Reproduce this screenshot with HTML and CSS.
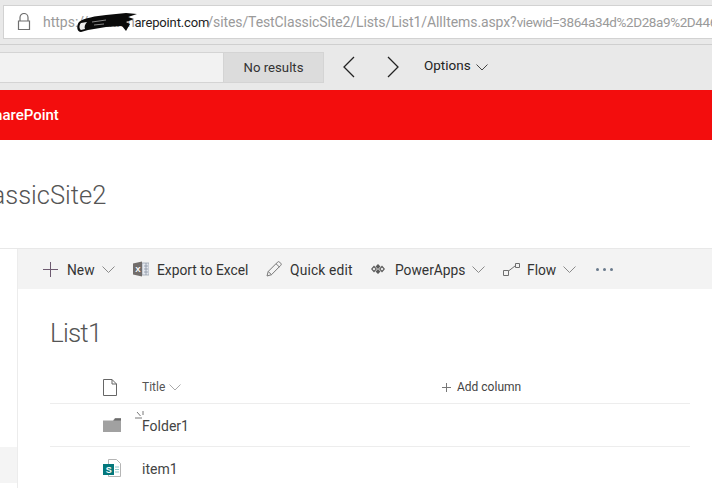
FILE: index.html
```html
<!DOCTYPE html>
<html lang="en">
<head>
<meta charset="utf-8">
<title>List1</title>
<link rel="stylesheet" href="styles.css">
</head>
<body>
<header class="browser">
  <div class="urlwrap">
    <div class="urlbar">
      <svg class="lock" width="14" height="18" viewBox="0 0 14 18"><path d="M3 8V4.500a4 4 0 0 1 8 0V8M1.500 8h11v8.500h-11z" fill="none" stroke="#6f6f6f" stroke-width="1.200"/></svg>
      <span class="url"><span class="dim">https://</span><span class="masked">xxxx.sh</span><span class="host">arepoint.com</span><span class="dim path">/sites/TestClassicSite2/Lists/List1/AllItems.aspx?</span><span class="dim query">viewid=3864a34d%2D28a9%2D446b%2D</span></span>
      <svg class="scribble" width="62" height="22" viewBox="0 0 62 22"><path d="M3 10C8 6 20 4 30 3L50 1l11 1-9 3 6 2-8 3 4 2-4 7-4-5-16 1-18 3-7 2C1 20 0 14 3 10z" fill="#0a0a0a"/><path d="M5 11c-2 2-2 6 0 7l4-1c-1-2 0-5 2-7z" fill="#eee"/><path d="M16 10l14-2M18 13l10-1" stroke="#888" stroke-width="1"/></svg>
    </div>
  </div>
  <div class="findbar">
    <div class="findinput"></div>
    <div class="findcount">No results</div>
    <svg class="findnav prev" width="13" height="22" viewBox="0 0 13 22"><path d="M12 1 2 11l10 10" fill="none" stroke="#222" stroke-width="1.300"/></svg>
    <svg class="findnav next" width="13" height="22" viewBox="0 0 13 22"><path d="M1 1l10 10L1 21" fill="none" stroke="#222" stroke-width="1.300"/></svg>
    <span class="options">Options</span>
    <svg class="optchev" width="12" height="7" viewBox="0 0 12 7"><path d="M.5.500 6 6 11.500.5" fill="none" stroke="#444"/></svg>
  </div>
</header>
<div class="suitebar"><span class="brand">SharePoint</span></div>
<div class="sitehead"><h1 class="sitename">TestClassicSite2</h1></div>
<div class="workspace">
  <nav class="leftnav"><div class="navpick"></div></nav>
  <main class="content">
    <div class="cmdbar">
      <div class="cmd cmd-new">
        <svg width="15" height="15" viewBox="0 0 15 15"><path d="M7.500 0v15M0 7.500h15" stroke="#6d5a70" stroke-width="1"/></svg>
        <span class="lbl w-new">New</span>
        <svg class="chev" width="13" height="7" viewBox="0 0 13 7"><path d="M.5.500 6.500 6.500 12.500.5" fill="none" stroke="#8a8a8a"/></svg>
      </div>
      <div class="cmd cmd-excel">
        <svg width="16" height="16" viewBox="0 0 16 16"><path d="M9 2h7v12H9z" fill="#e4e8ef" stroke="#9aa3b0" stroke-width=".8"/><path d="M11 5h4M11 8h4M11 11h4M13 2v12" stroke="#8a94a3" stroke-width=".8"/><path d="M0 2.500 9 .5v15l-9-2z" fill="#716c6a"/><text x="2.200" y="11" class="xmark">X</text></svg>
        <span class="lbl w-excel">Export to Excel</span>
      </div>
      <div class="cmd cmd-edit">
        <svg width="16" height="16" viewBox="0 0 16 16"><path d="M1 15l1.200-4.500L11.500 1.200a1.500 1.500 0 0 1 2.200 0l1 1a1.500 1.500 0 0 1 0 2.200L5.500 13.700zM2.200 10.500l3.300 3.200M10 2.700l3.300 3.200" fill="none" stroke="#777" stroke-width="1"/></svg>
        <span class="lbl w-edit">Quick edit</span>
      </div>
      <div class="cmd cmd-apps">
        <svg width="14" height="10" viewBox="0 0 14 10"><path d="M3 1.500 6 5 3 8.500 0 5zM11 1.500 14 5l-3 3.500L8 5z" fill="#5b5b5b"/><path d="M7 0 9.500 2.500 7 5 4.500 2.500zM7 5l2.500 2.500L7 10 4.500 7.500z" fill="#5b5b5b"/><path d="M3 3.500 4.500 5 3 6.500 1.500 5zM11 3.500 12.500 5 11 6.500 9.500 5z" fill="#f3f3f3"/></svg>
        <span class="lbl w-apps">PowerApps</span>
        <svg class="chev" width="13" height="7" viewBox="0 0 13 7"><path d="M.5.500 6.500 6.500 12.500.5" fill="none" stroke="#8a8a8a"/></svg>
      </div>
      <div class="cmd cmd-flow">
        <svg width="17" height="13" viewBox="0 0 17 13"><path d="M.5 7.500h5v5h-5zM12.500.5h4v4h-4zM5.500 8 12 3" fill="none" stroke="#6e6e6e"/></svg>
        <span class="lbl w-flow">Flow</span>
        <svg class="chev" width="13" height="7" viewBox="0 0 13 7"><path d="M.5.500 6.500 6.500 12.500.5" fill="none" stroke="#8a8a8a"/></svg>
      </div>
      <div class="more"><i></i><i></i><i></i></div>
    </div>
    <section class="listarea">
      <h2 class="listname">List1</h2>
      <div class="row headrow">
        <div class="iconcol"><svg width="14" height="17" viewBox="0 0 14 17"><path d="M.5.500h8.500l4.500 4.500v11.500H.5zM9 .5V5h4.500" fill="none" stroke="#666"/></svg></div>
        <div class="titlecol"><span class="coltitle">Title</span><svg width="12" height="7" viewBox="0 0 12 7"><path d="M.5.500 6 6 11.500.5" fill="none" stroke="#aaa"/></svg></div>
        <div class="addcol"><svg width="9" height="9" viewBox="0 0 9 9"><path d="M4.500 0v9M0 4.500h9" stroke="#777"/></svg><span>Add column</span></div>
      </div>
      <div class="row itemrow">
        <div class="iconcol"><svg width="18" height="14" viewBox="0 0 18 14"><path d="M0 2.500h10L12 0h6v14H0z" fill="#a1a1a1"/><path d="M10.500 2.500 12.300.6H18v1.900z" fill="#6b6b6b"/></svg></div>
        <div class="titlecol itemname">Folder1
          <svg class="spark" width="9" height="8" viewBox="0 0 9 8"><path d="M0 7h7M2 1l3.500 4M8 0v4" stroke="#555" stroke-width=".8" fill="none"/></svg>
        </div>
      </div>
      <div class="row itemrow">
        <div class="iconcol"><svg width="18" height="18" viewBox="0 0 18 18"><path d="M5.500.5h8l4 4v13h-12z" fill="#fff" stroke="#b5b5b5"/><path d="M12 8h4M12 10.500h4M12 13h4" stroke="#8fc7c9"/><path d="M0 5h11v11H0z" fill="#03787c"/><text x="2.800" y="13.800" class="smark">S</text></svg></div>
        <div class="titlecol itemname">item1</div>
      </div>
    </section>
  </main>
</div>
</body>
</html>
```
FILE: styles.css
```css
* { box-sizing: border-box; }
html, body { margin: 0; height: 100%; overflow: hidden; background: #fff; }
body { width: 712px; height: 488px; font-family: Roboto, "Open Sans", "Liberation Sans", sans-serif; color: #333; }
h1, h2 { margin: 0; font-weight: 400; }

.browser { height: 90px; background: #e9e9e9; overflow: hidden; }
.urlwrap { height: 45px; padding: 5px 0 0 3px; border-bottom: 1px solid #cfcfcf; }
.urlbar { position: relative; width: 760px; height: 34px; display: flex; align-items: center; background: #fff; border: 1px solid #d2d2d2; padding-left: 13px; white-space: nowrap; }
.lock { flex: none; margin-right: 12px; }
.url { display: flex; align-items: baseline; font-size: 14px; color: #111; }
.dim { color: #9a9a9a; }
.masked { display: block; width: 46px; text-align: right; color: #9a9a9a; }
.host { display: block; width: 73px; font-size: 13px; letter-spacing: -.15px; color: #222; }
.path { letter-spacing: -.1px; }
.query { font-size: 13.500px; letter-spacing: -.4px; }
.scribble { position: absolute; left: 72px; top: 6px; }

.findbar { display: flex; align-items: center; height: 44px; }
.findinput { width: 223px; height: 31px; background: #f2f2f2; border: 1px solid #d4d4d4; border-left: 0; border-right: 0; }
.findcount { width: 101px; height: 31px; display: flex; align-items: center; justify-content: center; font-size: 13.200px; color: #333; background: #dcdcdc; border: 1px solid #d4d4d4; }
.findnav { flex: none; }
.prev { margin-left: 18px; }
.next { margin-left: 32px; }
.options { margin-left: 24px; margin-top: -5px; font-size: 13.500px; color: #222; }
.optchev { margin-left: 5px; }

.suitebar { height: 50px; background: #f30d0d; display: flex; align-items: center; overflow: hidden; }
.brand { margin-left: -15px; font-size: 15px; font-weight: 500; color: #fff; }

.sitehead { height: 108px; display: flex; align-items: center; overflow: hidden; }
.sitename { margin-left: -79px; margin-top: 1px; font-size: 25.500px; color: #555; white-space: nowrap; font-weight: 300; }

.workspace { display: flex; height: 240px; border-top: 1px solid #e8e8e8; }
.leftnav { width: 18px; flex: none; border-right: 1px solid #ececec; display: flex; flex-direction: column; }
.navpick { height: 36px; margin-top: 198px; background: #f4f4f4; }
.content { flex: 1; min-width: 0; }

.cmdbar { height: 40px; display: flex; align-items: center; background: #f3f3f3; font-size: 13.800px; color: #333; white-space: nowrap; }
.cmd { display: flex; align-items: center; flex: none; }
.cmd-new { margin-left: 25px; }
.chev { margin-left: 8px; }
.lbl { display: block; padding-top: 2px; }
.w-new { margin-left: 9px; width: 27px; }
.cmd-excel { margin-left: 18px; }
.w-excel { margin-left: 8px; width: 91px; }
.cmd-edit { margin-left: 18px; }
.w-edit { margin-left: 8px; width: 63px; letter-spacing: .15px; }
.cmd-apps { margin-left: 18px; }
.w-apps { margin-left: 10px; width: 69px; }
.cmd-flow { margin-left: 18px; }
.w-flow { margin-left: 7px; width: 28px; }
.xmark { font: 700 8px "Liberation Sans", sans-serif; fill: #fff; }
.smark { font: 700 9px "Liberation Sans", sans-serif; fill: #fff; }
.more { display: flex; gap: 4px; margin-left: 20px; }
.more i { width: 3px; height: 3px; border-radius: 50%; background: #6a7a8c; }

.listarea { padding: 0 22px 0 32px; }
.listname { height: 80px; padding-top: 26px; font-size: 26px; letter-spacing: -.8px; line-height: 36px; color: #555; font-weight: 300; }
.row { display: flex; align-items: center; border-bottom: 1px solid #ededed; }
.headrow { height: 35px; padding-top: 2px; }
.itemrow { height: 43px; }
.iconcol { width: 92px; flex: none; display: flex; padding-left: 53px; }
.titlecol { position: relative; display: flex; align-items: center; width: 300px; flex: none; }
.coltitle { font-size: 12px; color: #555; margin-right: 4px; }
.addcol { display: flex; align-items: center; font-size: 12px; color: #444; }
.addcol span { margin-left: 6px; }
.itemname { font-size: 14px; color: #444; padding-top: 2px; }
.spark { position: absolute; left: -7px; top: -5px; }
```
